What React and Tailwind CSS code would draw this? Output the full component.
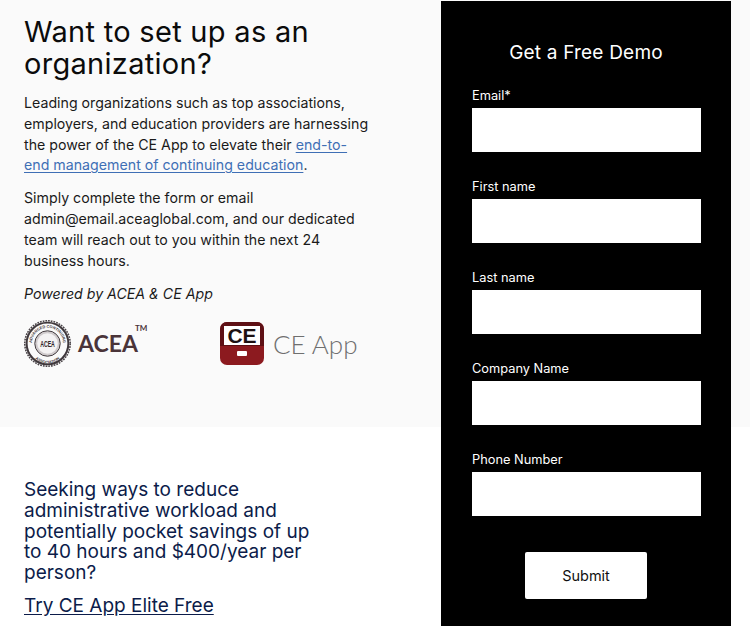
import React from "react";

const sans = "font-['Inter','Liberation_Sans',sans-serif]";

const fields = ["Email*", "First name", "Last name", "Company Name", "Phone Number"];

const AceaSeal = () => (
  <svg viewBox="0 0 48 48" className="w-[47px] h-[47px] shrink-0">
    <defs>
      <path id="sealTop" d="M8 24a16 16 0 0 1 32 0" />
      <path id="sealBottom" d="M5.500 26a18.500 18.500 0 0 0 37 0" />
    </defs>
    <circle cx="24" cy="24" r="23.200" fill="none" stroke="#4a4448" strokeWidth="1.600" strokeDasharray="1.800 1" />
    <circle cx="24" cy="24" r="21.300" fill="#fafafa" stroke="#3f383c" strokeWidth="2" />
    <circle cx="24" cy="24" r="13" fill="#cfcacc" stroke="#3f383c" strokeWidth="1" />
    <circle cx="24" cy="24" r="10.500" fill="#f4f2f3" />
    <text fill="#3d3438" fontSize="4" fontWeight="700" fontFamily="Liberation Sans">
      <textPath href="#sealTop" startOffset="50%" textAnchor="middle">ADVANCED CONTINUING</textPath>
    </text>
    <text fill="#3d3438" fontSize="4" fontWeight="700" fontFamily="Liberation Sans">
      <textPath href="#sealBottom" startOffset="50%" textAnchor="middle">ASSOCIATION</textPath>
    </text>
    <text x="24" y="27.500" textAnchor="middle" fill="#2f2629" fontSize="9.500" fontWeight="700" textLength="15" lengthAdjust="spacingAndGlyphs" fontFamily="Liberation Sans">ACEA</text>
  </svg>
);

const CeIcon = () => (
  <div className="relative w-[44px] h-[43px] shrink-0 rounded-[7px] bg-[#8c1a1f] overflow-hidden">
    <div className="absolute left-0 right-0 top-0 h-[23px] bg-[#5e1015]" />
    <div className="absolute left-[4px] right-[4px] top-[4px] h-[19px] bg-white" />
    <div className="absolute left-0 right-0 top-[4px] text-center font-['Liberation_Sans',sans-serif] font-bold text-[21px] leading-[20px] text-[#1d1113]">
      CE
    </div>
    <div className="absolute left-0 right-0 top-[23px] h-px bg-[#5e0f13]" />
    <div className="absolute left-[17px] top-[29px] w-[10px] h-[5px] bg-white rounded-[1px]" />
  </div>
);

export default function App() {
  return (
    <div className={`${sans} w-[750px] h-[637px] overflow-hidden flex bg-[linear-gradient(#fafafa_427px,#ffffff_427px)]`}>
      <div className="w-[441px] pl-6 flex flex-col">
        <div className="h-[427px] pt-[16px] pr-[71px]">
          <h1 className="text-[29px] leading-[32px] font-normal text-[#0b0b0b] tracking-[0.3px]">
            Want to set up as an organization?
          </h1>
          <p className="mt-[13px] text-[14.200px] leading-[20.800px] text-[#1a1a1a]">
            Leading organizations such as top associations, employers, and education providers are harnessing the power of the CE App to elevate their{" "}
            <a className="text-[#3f6fb5] underline underline-offset-2">end-to-end management of continuing education</a>.
          </p>
          <p className="mt-[12px] text-[14.200px] leading-[20.800px] text-[#1a1a1a]">
            Simply complete the form or email admin@email.aceaglobal.com, and our dedicated team will reach out to you within the next 24 business hours.
          </p>
          <p className="mt-[13px] text-[14.200px] leading-[20.800px] italic text-[#1a1a1a]">Powered by ACEA &amp; CE App</p>
          <div className="mt-[15px] flex items-center">
            <div className="w-[196px] flex items-center gap-[7px]">
              <AceaSeal />
              <div className="relative text-[23px] leading-none font-bold text-[#4a3439] font-['Lato',sans-serif]">
                ACEA
                <span className="absolute left-[57px] -top-[8px] text-[8px] font-bold">TM</span>
              </div>
            </div>
            <div className="flex items-center gap-[9px]">
              <CeIcon />
              <span className="font-['Lato',sans-serif] font-light text-[26px] leading-none text-[#6f6f6f]">CE App</span>
            </div>
          </div>
        </div>
        <div className="pt-[53px] pr-[122px]">
          <h2 className="text-[19px] leading-[20.800px] font-normal text-[#0c1c4a]">
            Seeking ways to reduce administrative workload and potentially pocket savings of up to 40 hours and $400/year per person?
          </h2>
          <a className="block mt-[10px] text-[19px] leading-6 text-[#0c1c4a] underline underline-offset-2">Try CE App Elite Free</a>
        </div>
      </div>
      <div className="mt-px w-[290px] h-[625px] bg-black px-[31px] flex flex-col text-white">
        <h3 className="mt-[40px] text-center text-[19px] leading-6 font-normal tracking-[0.2px]">Get a Free Demo</h3>
        <div className="mt-[18px] flex flex-col gap-[22px]">
          {fields.map((f) => (
            <label key={f} className="flex flex-col">
              <span className="text-[12.800px] leading-[25px]">{f}</span>
              <input className="w-[229px] h-[44px] bg-white border-0 outline-none" />
            </label>
          ))}
        </div>
        <button className="mt-[36px] mx-auto w-[122px] h-[47px] bg-white rounded-[2px] text-[14.500px] text-[#111]">Submit</button>
      </div>
    </div>
  );
}
